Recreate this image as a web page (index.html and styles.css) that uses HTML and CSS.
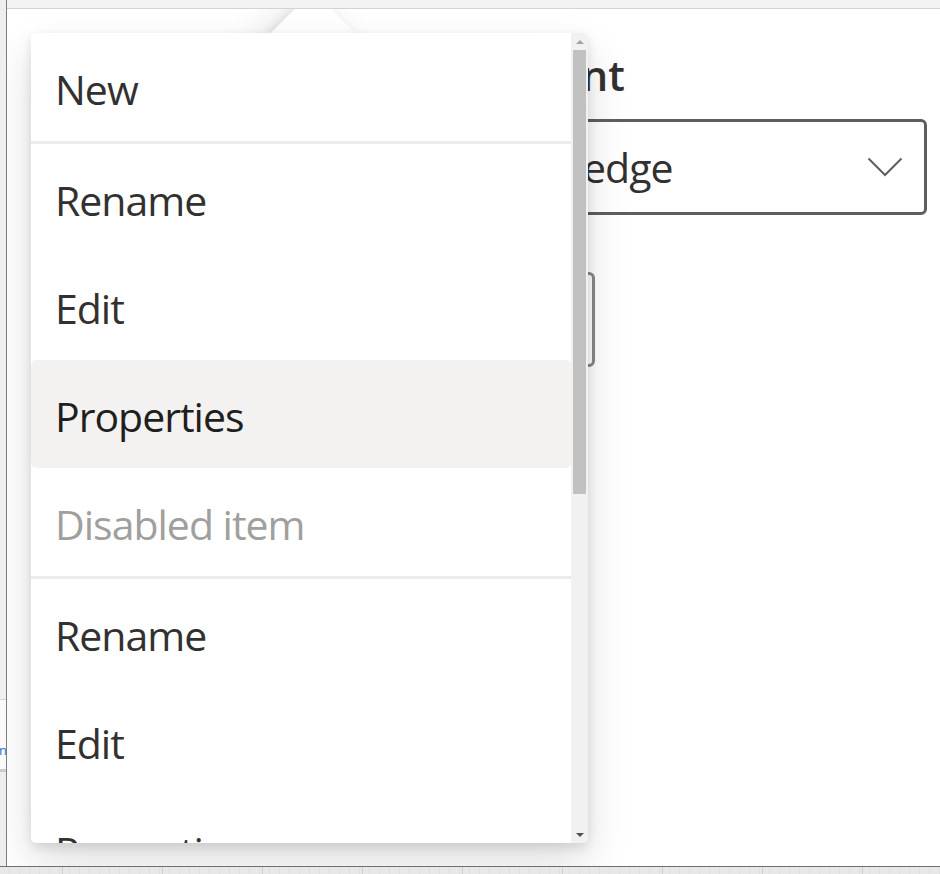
FILE: index.html
```html
<!DOCTYPE html>
<html lang="en">

<head>
    <meta charset="UTF-8">
    <meta name="viewport" content="width=device-width, initial-scale=1.0">
    <title>Dropdown menu</title>
    <link rel="stylesheet" href="styles.css">
</head>

<body>
    <div class="desk">
        <!-- window behind, only its edge shows -->
        <div class="side">
            <div class="side-top"></div>
            <div class="side-tab"><span>Administration</span></div>
            <div class="side-rest"></div>
        </div>

        <div class="window">
            <div class="title-strip"></div>

            <main class="page">
                <div class="field">
                    <label class="field-label">Department</label>
                    <div class="dropdown">
                        <span class="dropdown-title">Knowledge</span>
                        <svg class="dropdown-caret" width="36" height="20" viewBox="0 0 36 20">
                            <path d="M1.5 1.5 L18 18 L34.5 1.5" fill="none" stroke="#605e5c" stroke-width="2" />
                        </svg>
                    </div>
                    <button class="btn">Open menu</button>
                </div>

                <div class="callout">
                    <div class="callout-beak"></div>
                    <div class="callout-main">
                        <ul class="menu">
                            <li class="menu-item">New</li>
                            <li class="menu-divider"></li>
                            <li class="menu-item">Rename</li>
                            <li class="menu-item">Edit</li>
                            <li class="menu-item is-hovered">Properties</li>
                            <li class="menu-item is-disabled">Disabled item</li>
                            <li class="menu-divider"></li>
                            <li class="menu-item">Rename</li>
                            <li class="menu-item">Edit</li>
                            <li class="menu-item">Properties</li>
                        </ul>
                        <div class="scrollbar">
                            <div class="scroll-btn"><span class="arrow-up"></span></div>
                            <div class="scroll-track">
                                <div class="scroll-thumb"></div>
                            </div>
                            <div class="scroll-btn"><span class="arrow-down"></span></div>
                        </div>
                    </div>
                </div>
            </main>
        </div>
    </div>

    <div class="taskbar"></div>
</body>

</html>
```

FILE: styles.css
```css
* {
    box-sizing: border-box;
}

body {
    margin: 0;
    padding: 0;
    height: 874px;
    overflow: hidden;
    display: flex;
    flex-direction: column;
    font-family: 'Open Sans', 'Noto Sans', sans-serif;
    color: #323130;
    background-color: #ececec;
}

.desk {
    display: flex;
    flex-direction: row;
    height: 867px;
    border-bottom: 1px solid #6f6f6f;
}

/* sliver of the other window on the left */
.side {
    width: 7px;
    display: flex;
    flex-direction: column;
    border-right: 1px solid #7d7d7d;
}

.side-top {
    height: 700px;
    background-color: #efefef;
    border-bottom: 1px solid #d6d6d6;
}

.side-tab {
    height: 72px;
    background-color: #fafafa;
    border-bottom: 3px solid #cdcdcd;
    display: flex;
    justify-content: flex-end;
    align-items: center;
    overflow: hidden;
    padding-top: 30px;
}

.side-tab span {
    font-size: 13px;
    color: #2b6fd6;
    white-space: nowrap;
    margin-right: -1px;
}

.side-rest {
    flex: 1;
    background-color: #eeeeee;
}

.window {
    flex: 1;
    display: flex;
    flex-direction: column;
}

.title-strip {
    height: 9px;
    background-color: #f3f3f3;
    border-bottom: 1px solid #d3d3d3;
}

.page {
    flex: 1;
    position: relative;
    overflow: hidden;
    background-color: #ffffff;
}

/* dropdown field under the menu */
.field {
    margin-left: 370px;
    margin-right: 13px;
    padding-top: 21px;
    display: flex;
    flex-direction: column;
    align-items: flex-start;
}

.field-label {
    font-size: 42px;
    font-weight: 600;
    line-height: 60px;
    padding: 15px 0;
    color: #323130;
}

.dropdown {
    width: 100%;
    height: 96px;
    margin-top: -1px;
    border: 3px solid #605e5c;
    border-radius: 6px;
    display: flex;
    align-items: center;
    justify-content: space-between;
    padding: 0 21px 0 91px;
}

.dropdown-title {
    font-size: 41px;
    letter-spacing: -1px;
    line-height: 90px;
    color: #323130;
}

.btn {
    margin-top: 57px;
    width: 218px;
    height: 95px;
    border: 3px solid #8a8886;
    border-radius: 6px;
    background-color: #ffffff;
    font-family: inherit;
    font-size: 42px;
    font-weight: 600;
    color: #323130;
}

/* context menu callout */
.callout {
    position: absolute;
    left: 24px;
    top: 24px;
    width: 557px;
    height: 810px;
}

.callout-beak {
    position: absolute;
    left: 252px;
    top: -30px;
    width: 60px;
    height: 60px;
    background-color: #ffffff;
    transform: rotate(45deg);
    box-shadow: 0 19px 43px rgba(0, 0, 0, 0.132), 0 4px 11px rgba(0, 0, 0, 0.108);
}

.callout-main {
    position: relative;
    z-index: 1;
    height: 100%;
    display: flex;
    flex-direction: row;
    background-color: #ffffff;
    border-radius: 5px;
    overflow: hidden;
    box-shadow: 0 19px 43px rgba(0, 0, 0, 0.132), 0 4px 11px rgba(0, 0, 0, 0.108);
}

.menu {
    flex: 1;
    list-style-type: none;
    margin: 0;
    padding: 0;
    overflow: hidden;
}

.menu-item {
    height: 108px;
    line-height: 104px;
    padding: 4px 24px 0;
    font-size: 41px;
    letter-spacing: -1px;
    color: #323130;
    white-space: nowrap;
    border-radius: 5px;
}

.menu-item.is-hovered {
    background-color: #f3f2f1;
    color: #201f1e;
}

.menu-item.is-disabled {
    color: #a19f9d;
}

.menu-divider {
    height: 3px;
    background-color: #edebe9;
}

.scrollbar {
    width: 17px;
    display: flex;
    flex-direction: column;
    background-color: #f1f1f1;
}

.scroll-btn {
    height: 17px;
    display: flex;
    align-items: center;
    justify-content: center;
}

.arrow-up {
    width: 0;
    height: 0;
    border-left: 4px solid transparent;
    border-right: 4px solid transparent;
    border-bottom: 4px solid #a3a3a3;
}

.arrow-down {
    width: 0;
    height: 0;
    border-left: 4px solid transparent;
    border-right: 4px solid transparent;
    border-top: 4px solid #505050;
}

.scroll-track {
    flex: 1;
    padding: 0 2px;
}

.scroll-thumb {
    height: 444px;
    background-color: #c1c1c1;
}

.taskbar {
    flex: 1;
    background-color: #e8e8e8;
    background-image:
        repeating-linear-gradient(90deg, transparent 0, transparent 62px, #cfcfcf 62px, #cfcfcf 63px, transparent 63px, transparent 100px),
        repeating-linear-gradient(90deg, transparent 0, transparent 9px, #e0e0e0 9px, #e0e0e0 10px);
}
```
